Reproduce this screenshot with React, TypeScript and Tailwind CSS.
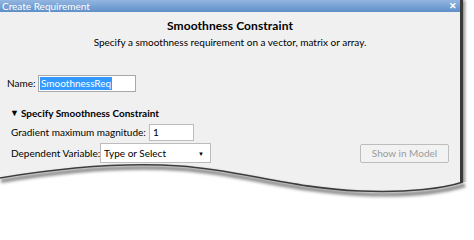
import * as React from "react";

const font = { fontFamily: 'Lato, "Open Sans", sans-serif' };

const TornEdge: React.FC = () => (
  <svg
    className="absolute inset-0 pointer-events-none"
    width={474}
    height={206}
    viewBox="0 0 474 206"
  >
    <defs>
      <filter id="blur" x="-10%" y="-50%" width="120%" height="200%">
        <feGaussianBlur stdDeviation="1.6" />
      </filter>
    </defs>
    <path
      d="M0,178 C60,168 120,162 180,166 C240,170 290,188 360,191 C410,193 445,188 463,182 L474,182 L474,206 L0,206 Z"
      fill="#ffffff"
    />
    <path
      d="M0,179 C60,169 120,163 180,167 C240,171 290,189 360,192 C410,194 445,189 464,183"
      fill="none"
      stroke="#000"
      strokeOpacity={0.45}
      strokeWidth={4}
      filter="url(#blur)"
      transform="translate(1,2)"
    />
    <path
      d="M0,178 C60,168 120,162 180,166 C240,170 290,188 360,191 C410,193 445,188 463,182"
      fill="none"
      stroke="#3c3c3c"
      strokeWidth={1.6}
    />
  </svg>
);

export default function App() {
  return (
    <div className="relative w-[474px] h-[206px] bg-white overflow-hidden whitespace-nowrap" style={font}>
      {/* Dialog window */}
      <div className="w-[463px] h-[200px] flex flex-col bg-[#f0f0f0] border-r-[3px] border-[#3a3a3a] shadow-[2px_0_3px_rgba(0,0,0,0.45)]">
        {/* Title bar */}
        <div className="h-[12px] flex items-center justify-between bg-gradient-to-b from-[#93b6e0] to-[#5f8fc8] pl-[2px] pr-[3px]">
          <span className="text-[10px] leading-[12px] text-white">Create Requirement</span>
          <span className="text-[9px] leading-[12px] font-bold text-white">✕</span>
        </div>

        {/* Body */}
        <div className="flex flex-col text-[10px] text-black">
          <div className="mt-[7px] h-[14px] leading-[14px] text-center text-[12px] font-bold tracking-[0.1px]">
            Smoothness Constraint
          </div>
          <div className="mt-[2px] h-[14px] leading-[14px] text-center">
            Specify a smoothness requirement on a vector, matrix or array.
          </div>

          {/* Name row */}
          <div className="mt-[26px] h-[17px] flex items-center pl-[7px]">
            <span className="w-[31px] shrink-0">Name:</span>
            <div className="w-[98px] h-[17px] bg-white border border-[#a8a8a8] flex items-center pl-[1px]">
              <span className="bg-[#3399ff] text-white leading-[13px] px-[1px]">SmoothnessReq</span>
            </div>
          </div>

          {/* Section header */}
          <div className="mt-[14px] h-[14px] flex items-center pl-[10px] font-bold">
            <span className="text-[9px] mr-[2px]">▼</span>
            <span>Specify Smoothness Constraint</span>
          </div>

          {/* Gradient row */}
          <div className="mt-[4px] h-[17px] flex items-center pl-[11px]">
            <span className="w-[138px] shrink-0">Gradient maximum magnitude:</span>
            <div className="w-[45px] h-[17px] bg-white border border-[#bcbcbc] flex items-center pl-[3px]">
              1
            </div>
          </div>

          {/* Dependent row */}
          <div className="mt-[2px] h-[20px] flex items-center pl-[11px] pr-[11px]">
            <span className="w-[89px] shrink-0">Dependent Variable:</span>
            <div className="w-[111px] h-[20px] bg-white border border-[#bcbcbc] flex items-center justify-between pl-[3px] pr-[6px]">
              <span>Type or Select</span>
              <span className="text-[6px]">▼</span>
            </div>
            <div className="ml-auto w-[89px] h-[19px] rounded-[2px] border border-[#bdbdbd] bg-[#f2f2f2] flex items-center justify-center text-[#9a9a9a]">
              Show in Model
            </div>
          </div>
        </div>
      </div>

      <TornEdge />
    </div>
  );
}
